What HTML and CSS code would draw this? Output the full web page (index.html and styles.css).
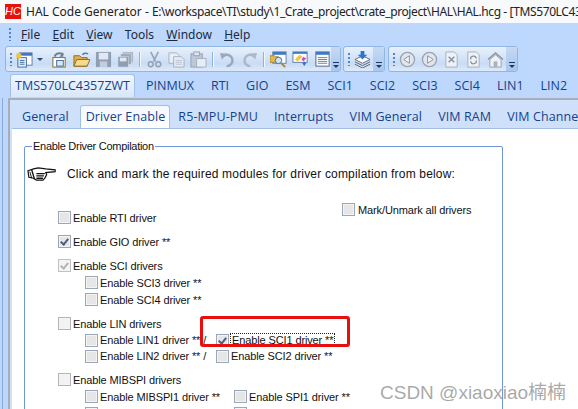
FILE: index.html
```html
<!DOCTYPE html>
<html lang="en">
<head>
  <meta charset="UTF-8">
  <title>HAL Code Generator</title>
  <link rel="stylesheet" href="styles.css">
</head>
<body>

  <div class="titlebar">
    <span class="app-logo">HC</span>
    <span class="title-text">HAL Code Generator - </span>
    <span class="title-path">E:\workspace\TI\study\1_Crate_project\crate_project\HAL\HAL.hcg - [TMS570LC43</span>
  </div>

  <div class="menubar">
    <span class="grip"></span>
    <span class="menu"><u>F</u>ile</span>
    <span class="menu"><u>E</u>dit</span>
    <span class="menu"><u>V</u>iew</span>
    <span class="menu">Tools</span>
    <span class="menu"><u>W</u>indow</span>
    <span class="menu"><u>H</u>elp</span>
  </div>

  <div class="toolbars">
    <div class="toolbar tb-main">
      <span class="grip"></span>
      <svg class="ico" viewBox="0 0 18 18"><rect x="4" y="2" width="13" height="13" fill="#fff" stroke="#5a7fa8"/><rect x="4" y="2" width="13" height="3" fill="#3f78c4"/><rect x="2" y="7" width="9" height="10" fill="#e8f0fa" stroke="#3d6a9c"/><path d="M4 10h5M4 12h5M4 14h5" stroke="#3d6a9c"/><path d="M3 1l1 2 2-1-1 2 2 1-2 1 1 2-2-1-1 2-1-2-2 1 1-2-2-1 2-1-1-2 2 1z" fill="#f4c53a"/></svg>
      <span class="caret"></span>
      <svg class="ico ico-gap after-caret" viewBox="0 0 18 18"><path d="M4 6a5 4 0 0 1 9-2" fill="none" stroke="#6b7f92" stroke-width="2"/><path d="M13 1v5h-4z" fill="#6b7f92"/><rect x="2" y="7" width="13" height="10" fill="#fff" stroke="#7b6a3a"/><rect x="6" y="10" width="7" height="6" fill="#dbe8f8" stroke="#3d6a9c"/></svg>
      <svg class="ico ico-gap" viewBox="0 0 18 18"><path d="M1 16V5h6l2 2h6v9z" fill="#e0b050" stroke="#8a6a20"/><path d="M1 16l3-7h14l-3 7z" fill="#f6d98a" stroke="#8a6a20"/><path d="M10 4a4 3 0 0 1 6-1" fill="none" stroke="#5c7ba0" stroke-width="1.5"/></svg>
      <svg class="ico ico-gap off" viewBox="0 0 18 18"><rect x="1" y="1" width="16" height="16" fill="#7f8ea3"/><rect x="4" y="2" width="10" height="7" fill="#e4e9f0"/><rect x="5" y="11" width="8" height="6" fill="#c0c8d4"/></svg>
      <svg class="ico ico-gap off" viewBox="0 0 18 18"><rect x="6" y="1" width="11" height="11" fill="#a3aebd"/><rect x="4" y="3" width="11" height="11" fill="#8f9cad" stroke="#dfe5ec" stroke-width=".5"/><rect x="1" y="6" width="11" height="11" fill="#7f8ea3" stroke="#dfe5ec" stroke-width=".5"/><rect x="3" y="7" width="7" height="4" fill="#e4e9f0"/></svg>
      <span class="sep"></span>
      <svg class="ico ico-gap off" viewBox="0 0 18 18"><path d="M5 1l5 10M13 1l-5 10" stroke="#8492a3" stroke-width="1.6"/><circle cx="5" cy="14" r="2.6" fill="none" stroke="#8492a3" stroke-width="1.5"/><circle cx="13" cy="14" r="2.6" fill="none" stroke="#8492a3" stroke-width="1.5"/></svg>
      <svg class="ico ico-gap off" viewBox="0 0 18 18"><path d="M1 2h8l3 3v8H1z" fill="#eef1f5" stroke="#99a5b3"/><path d="M6 6h8l3 3v8H6z" fill="#eef1f5" stroke="#99a5b3"/><path d="M8 10h7M8 12h7M8 14h7" stroke="#b4bdc9"/></svg>
      <svg class="ico ico-gap off" viewBox="0 0 18 18"><rect x="1" y="3" width="12" height="14" fill="#b9c2ce" stroke="#8492a3"/><rect x="4" y="1" width="6" height="4" fill="#dfe4ea" stroke="#8492a3"/><path d="M7 8h10v9H7z" fill="#eef1f5" stroke="#99a5b3"/></svg>
      <span class="sep"></span>
      <svg class="ico ico-gap off" viewBox="0 0 18 18"><path d="M5 5a6 6 0 1 1 3 11" fill="none" stroke="#8d9bac" stroke-width="2.6"/><path d="M1 2l8 1-6 6z" fill="#8d9bac"/></svg>
      <svg class="ico ico-gap off" viewBox="0 0 18 18"><path d="M13 5a6 6 0 1 0-3 11" fill="none" stroke="#a3aebb" stroke-width="2.6"/><path d="M17 2l-8 1 6 6z" fill="#a3aebb"/></svg>
      <span class="sep"></span>
      <svg class="ico ico-gap" viewBox="0 0 18 18"><rect x="3" y="1" width="14" height="12" fill="#fff" stroke="#5a7fa8"/><rect x="3" y="1" width="14" height="3" fill="#3f78c4"/><path d="M0 5h5l1 1h3v6H0z" fill="#e8b84a" stroke="#8a6a20" stroke-width=".7"/><circle cx="9" cy="10" r="3.4" fill="#cfe3f7" stroke="#4a6a8a"/><path d="M12 13l4 4" stroke="#b8862a" stroke-width="2"/></svg>
      <svg class="ico ico-gap" viewBox="0 0 18 18"><rect x="1" y="1" width="15" height="11" fill="#fff" stroke="#5a7fa8"/><rect x="1" y="1" width="15" height="2" fill="#3f78c4"/><path d="M3 9l5-5 3 2-5 5z" fill="#f0c63c"/><path d="M12 6l3 2-3 3-2-2z" fill="#d44ac8"/><path d="M11 13l2-2 2 2-2 3z" fill="#3a70c8"/></svg>
      <svg class="ico ico-gap" viewBox="0 0 18 18"><rect x="2" y="1" width="14" height="15" fill="#fff" stroke="#45668c"/><rect x="2" y="1" width="14" height="3" fill="#3f78c4"/><path d="M4 7h10M4 9h10M4 11h10M4 13h10" stroke="#6d7d90"/></svg>
      <span class="tb-end"><span class="more"></span></span>
    </div>
    <div class="toolbar tb-short">
      <span class="grip"></span>
      <svg class="ico" viewBox="0 0 18 18"><path d="M1 9l8-4 8 4-8 4z" fill="#fff" stroke="#5b6672"/><path d="M1 11.5l8 4 8-4M1 14l8 4 8-4" fill="none" stroke="#5b6672"/><path d="M7 0h4v4h3l-5 5-5-5h3z" fill="#2e74c9"/></svg>
      <span class="tb-end"><span class="more"></span></span>
    </div>
    <div class="toolbar tb-nav">
      <span class="grip"></span>
      <svg class="ico nav" viewBox="0 0 18 18"><circle cx="9" cy="9" r="7.5" fill="#e2e6ec" stroke="#97a3b2" stroke-width="1.4"/><path d="M11 5v8l-6-4z" fill="#f2f4f7" stroke="#8693a3"/></svg>
      <svg class="ico nav" viewBox="0 0 18 18"><circle cx="9" cy="9" r="7.5" fill="#e2e6ec" stroke="#97a3b2" stroke-width="1.4"/><path d="M7 5v8l6-4z" fill="#f2f4f7" stroke="#8693a3"/></svg>
      <svg class="ico nav" viewBox="0 0 18 18"><path d="M3 1h9l3 3v13H3z" fill="#eef1f5" stroke="#a4aebb"/><path d="M6 6l6 6M12 6l-6 6" stroke="#8693a3" stroke-width="1.6"/></svg>
      <svg class="ico nav" viewBox="0 0 18 18"><path d="M3 1h9l3 3v13H3z" fill="#eef1f5" stroke="#a4aebb"/><path d="M6 9a3 3 0 0 1 6-1M12 10a3 3 0 0 1-6 1" fill="none" stroke="#8693a3" stroke-width="1.3"/></svg>
      <svg class="ico nav" viewBox="0 0 18 18"><path d="M1 9l8-7 8 7" fill="#c7ced8" stroke="#8693a3" stroke-width="1.3"/><path d="M3 9v8h12V9L9 4z" fill="#eef1f5" stroke="#98a3b1"/><rect x="7" y="11" width="4" height="6" fill="#a9b3c0"/></svg>
      <span class="tb-end"><span class="more"></span></span>
    </div>
  </div>

  <div class="tabs outer-tabs">
    <span class="tab active">TMS570LC4357ZWT</span>
    <span class="tab">PINMUX</span>
    <span class="tab">RTI</span>
    <span class="tab">GIO</span>
    <span class="tab">ESM</span>
    <span class="tab">SCI1</span>
    <span class="tab">SCI2</span>
    <span class="tab">SCI3</span>
    <span class="tab">SCI4</span>
    <span class="tab">LIN1</span>
    <span class="tab">LIN2</span>
  </div>

  <div class="outer-panel">
    <div class="tabs inner-tabs">
      <span class="tab">General</span>
      <span class="tab active">Driver Enable</span>
      <span class="tab">R5-MPU-PMU</span>
      <span class="tab">Interrupts</span>
      <span class="tab">VIM General</span>
      <span class="tab">VIM RAM</span>
      <span class="tab">VIM Channe</span>
    </div>

    <div class="inner-panel">
      <fieldset class="group">
        <legend>Enable Driver Compilation</legend>

        <div class="hint">
          <svg class="hand" viewBox="0 0 32 18"><path d="M1 5l6-2 5-1 8 1 10 1v2l-10 1 1 2-1 2-1 2-2 2h-7l-3-2-5-1z" fill="#fff" stroke="#111" stroke-width="1.3"/><path d="M5 4l3 10M10 8h9M10 10.500h8M10 13h7" stroke="#111" stroke-width="1.4"/><path d="M3 6l2 7" stroke="#111"/></svg>
          <span>Click and mark the required modules for driver compilation from below:</span>
        </div>

        <div class="drivers">
          <div class="driver-list">
            <label class="row top"><span class="cb"></span>Enable RTI driver</label>
            <label class="row top"><span class="cb on"></span>Enable GIO driver **</label>
            <label class="row top"><span class="cb on off"></span>Enable SCI drivers</label>
            <label class="row sub"><span class="cb"></span>Enable SCI3 driver **</label>
            <label class="row sub"><span class="cb"></span>Enable SCI4 driver **</label>

            <label class="row top"><span class="cb plain"></span>Enable LIN drivers</label>
            <div class="row sub tight">
              <label class="pair"><span class="cb"></span>Enable LIN1 driver ** /</label>
              <label class="pair"><span class="cb on"></span><span class="focus">Enable SCI1 driver **</span></label>
            </div>
            <div class="row sub tight">
              <label class="pair"><span class="cb"></span>Enable LIN2 driver ** /</label>
              <label class="pair"><span class="cb"></span>Enable SCI2 driver **</label>
            </div>

            <label class="row top"><span class="cb plain"></span>Enable MIBSPI drivers</label>
            <div class="row sub">
              <label class="pair wide"><span class="cb"></span>Enable MIBSPI1 driver **</label>
              <label class="pair"><span class="cb"></span>Enable SPI1 driver **</label>
            </div>
            <div class="row sub">
              <label class="pair wide"><span class="cb"></span>Enable MIBSPI3 driver **</label>
              <label class="pair"><span class="cb"></span>Enable SPI3 driver **</label>
            </div>
          </div>
          <label class="mark-all"><span class="cb"></span>Mark/Unmark all drivers</label>
        </div>
      </fieldset>
    </div>
  </div>

  <div class="red-box"></div>
  <div class="watermark">CSDN @xiaoxiao楠楠</div>

</body>
</html>
```

FILE: styles.css
```css
html, body {
  margin: 0;
  height: 409px;
  overflow: hidden;
}

body {
  position: relative;
  width: 578px;
  background: #bdd8fc;
  font-family: "Open Sans", "Noto Sans", sans-serif;
  font-size: 12px;
  color: #15428b;
}

.titlebar {
  height: 23px;
  background: #f8f9fb;
  display: flex;
  align-items: center;
  white-space: pre;
  overflow: hidden;
  color: #222;
  font-family: "Noto Sans", sans-serif;
  font-size: 12px;
}

.title-path {
  letter-spacing: -.38px;
}

.app-logo {
  width: 16px;
  height: 15px;
  margin: 0 5px;
  background: #e8120c;
  color: #fff;
  font: italic 11px/15px "Liberation Sans", sans-serif;
  text-align: center;
  flex: none;
}

.menubar {
  height: 23px;
  display: flex;
  align-items: center;
  padding-left: 9px;
  color: #1c2a40;
  font-family: "Noto Sans", sans-serif;
}

.menubar .grip {
  margin-right: 10px;
}

.menu {
  margin-right: 12.300px;
}

.grip {
  width: 2px;
  height: 13px;
  flex: none;
  background: repeating-linear-gradient(to bottom, #4e86c8 0 2px, transparent 2px 4px);
}

.toolbars {
  height: 26px;
  display: flex;
  padding-left: 5px;
}

.toolbar {
  height: 24px;
  display: flex;
  align-items: center;
  border: 1px solid #90b6e4;
  border-radius: 3px;
  background: linear-gradient(to bottom, #e8f1fc, #c9dcf5 70%, #ddeafb);
  margin-right: 3px;
  padding-left: 4px;
}

.tb-main { width: 330px; margin-right: 2px; }
.tb-short { width: 36px; }
.tb-nav { width: 124px; }

.ico {
  width: 17px;
  height: 17px;
  flex: none;
  margin-left: 4px;
}

.ico-gap { margin-left: 5px; }
.ico.after-caret { margin-left: 8px; }
.sep + .ico { margin-left: 6px; }
.ico.off { opacity: .8; }
.ico.nav { margin-left: 4px; margin-right: 1px; }

.caret {
  width: 0;
  height: 0;
  margin: 0 0 0 4px;
  border-left: 3px solid transparent;
  border-right: 3px solid transparent;
  border-top: 3px solid #2a4c7c;
}

.sep {
  width: 1px;
  height: 15px;
  margin-left: 5px;
  background: #8fb2dc;
  box-shadow: 1px 0 0 #f4f8fd;
  flex: none;
}

.tb-end {
  margin-left: auto;
  align-self: stretch;
  width: 11px;
  background: linear-gradient(to bottom, #c5d9f3, #a9c6ec);
  display: flex;
  align-items: flex-end;
  justify-content: center;
  padding-bottom: 3px;
}

.more {
  width: 6px;
  height: 5px;
  border-top: 1px solid #1c3a68;
  position: relative;
}

.more::after {
  content: "";
  position: absolute;
  left: 0;
  top: 2px;
  border-left: 3px solid transparent;
  border-right: 3px solid transparent;
  border-top: 3px solid #1c3a68;
}

.tabs {
  display: flex;
  white-space: nowrap;
  overflow: hidden;
  font-size: 12.500px;
}

.outer-tabs {
  height: 23px;
  padding: 2px 0 0 10px;
}

.outer-tabs .tab {
  padding: 3px 8.500px 0;
}

.tab.active {
  background: linear-gradient(to bottom, #f0f6fe, #d8e7fb);
  border: 1px solid #a0c0e8;
  border-bottom: 0;
  border-radius: 3px 3px 0 0;
}

.outer-tabs .tab.active {
  padding: 2px 4px 0;
  margin-right: 2.500px;
}

.outer-panel {
  margin: 1px 0 0 8px;
  border-top: 2px solid #a6aeb8;
  border-left: 2px solid #a6aeb8;
  background: #cfe1fa;
  height: 400px;
  box-shadow: -5px 0 0 #bdd8fc, -6px 0 0 #86abdc;
}

.inner-tabs {
  height: 23px;
  padding: 5px 0 0 4px;
  letter-spacing: .1px;
}

.inner-tabs .tab {
  padding: 3px 8px 0;
}

.inner-tabs .tab.active {
  padding: 2px 4px 0 5px;
  margin: 0 0 0 3px;
  background: linear-gradient(to bottom, #f4f8fe, #fff);
}

.inner-panel {
  margin-left: 2px;
  background: #fff;
  border-top: 1px solid #a0c0e8;
  height: 300px;
  padding: 11px 0 0 12px;
  color: #111;
  font-family: "Liberation Sans", sans-serif;
  font-size: 11px;
  letter-spacing: -.12px;
}

.group {
  width: 479px;
  height: 300px;
  margin: 0;
  padding: 0;
  border: 1px solid #6d97d8;
  border-radius: 2px;
  box-sizing: border-box;
}

.group legend {
  margin-left: 7px;
  padding: 0 1px;
  letter-spacing: -.28px;
}

.hint {
  display: flex;
  align-items: center;
  height: 18px;
  margin: 13px 0 0 2px;
}

.hint span {
  margin-left: 10px;
  font-size: 12px;
  letter-spacing: .18px;
}

.hand {
  width: 30px;
  height: 17px;
  flex: none;
}

.drivers {
  display: flex;
  margin: 26px 0 0 33px;
}

.driver-list {
  width: 284px;
  flex: none;
}

.row {
  display: flex;
  align-items: center;
  height: 17px;
  white-space: nowrap;
}

.row.top { margin-top: 7px; }
.row.top:first-child { margin-top: 0; }
.row.sub { margin-left: 27px; }
.row.tight { height: 16px; }

.cb {
  width: 11px;
  height: 11px;
  border: 1px solid #9aa7b8;
  background: #e6e6e6;
  box-shadow: inset 0 0 0 1px #f4f4f4;
  margin-right: 2px;
  flex: none;
  position: relative;
}

.cb.plain {
  border-color: #b4b4b4;
  background: #f2f2f2;
}

.cb.on::after {
  content: "";
  position: absolute;
  left: 3px;
  top: 1px;
  width: 3px;
  height: 6px;
  border: solid #4a5f80;
  border-width: 0 2px 2px 0;
  transform: rotate(40deg);
}

.cb.off {
  border-color: #c0c0c0;
  background: #f4f4f4;
}

.cb.off::after {
  border-color: #b4b4b4;
}

.pair {
  display: flex;
  align-items: center;
  width: 131px;
  flex: none;
}

.pair.wide {
  width: 149px;
}

.focus {
  outline: 1px dotted #222;
  padding: 0 1px;
}

.mark-all {
  display: flex;
  align-items: center;
  height: 17px;
  margin-top: -8px;
  white-space: nowrap;
}

.mark-all .cb {
  margin-right: 3px;
}

.red-box {
  position: absolute;
  left: 200px;
  top: 316px;
  width: 144px;
  height: 25px;
  border: 3px solid #e8100c;
  border-radius: 3px;
}

.watermark {
  position: absolute;
  left: 380px;
  top: 377px;
  font-family: "Liberation Sans", "Noto Sans CJK SC", sans-serif;
  font-size: 19px;
  color: rgba(110, 110, 110, .6);
  white-space: nowrap;
}
```
